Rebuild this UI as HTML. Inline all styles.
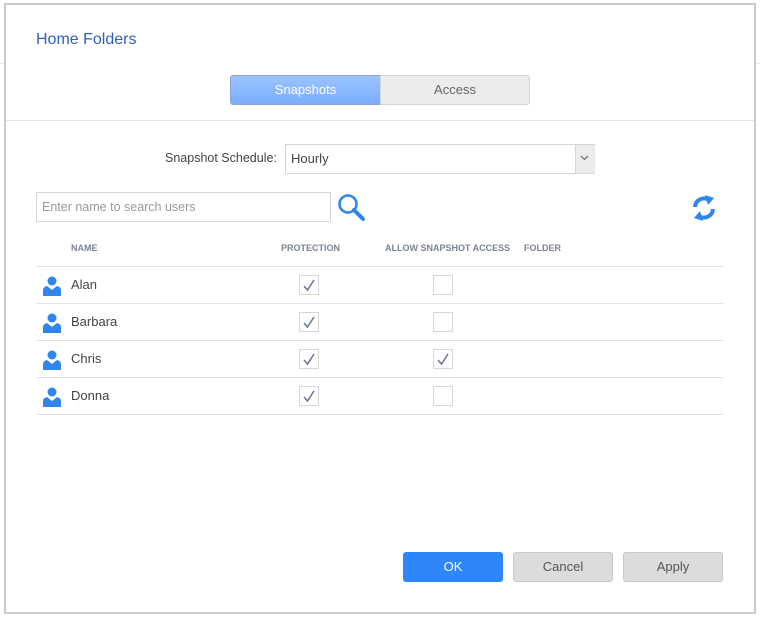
<!DOCTYPE html>
<html><head><style>
body{margin:0;width:760px;height:619px;background:#fff;position:relative;overflow:hidden;font-family:"Liberation Sans","DejaVu Sans",sans-serif;color:#444}
.a{position:absolute}
.dlg{left:4px;top:3px;width:748px;height:607px;border:2px solid #cbcbcb;background:#fff}
.btn{position:absolute;height:28px;border-radius:3px;font-size:13px;text-align:center;line-height:28px;box-sizing:border-box}
.hd{position:absolute;top:243px;font-size:9px;font-weight:bold;color:#7a8495}
.row{position:absolute;left:36px;width:688px;height:36px;border-bottom:1px solid #e3e3e3}
.nm{position:absolute;left:35px;top:10px;font-size:13px;color:#444}
.cb{position:absolute;top:8px;width:18px;height:18px;border:1px solid #d6d6d6;background:#fff}
.cb svg{position:absolute;left:2px;top:2px}
.ic{position:absolute;left:7px;top:9px}
</style></head><body>
<div class="a" style="left:0;top:63px;width:760px;height:1px;background:#e6e6e6"></div>
<div class="a dlg"></div>
<div class="a" style="left:36px;top:31px;font-size:16px;color:#2f5fbf">Home Folders</div>
<div class="btn" style="left:230px;top:75px;width:151px;height:30px;line-height:28px;background:linear-gradient(#9cc3ff,#7aaeff);border:1px solid #8aa8d6;color:#fff;border-radius:3px 0 0 3px">Snapshots</div>
<div class="btn" style="left:380px;top:75px;width:150px;height:30px;line-height:28px;background:#ececec;border:1px solid #d4d4d4;color:#666;border-radius:0 3px 3px 0">Access</div>
<div class="a" style="left:6px;top:120px;width:748px;height:1px;background:#e4e4e4"></div>
<div class="a" style="left:165px;top:151px;font-size:12.5px;color:#444">Snapshot Schedule:</div>
<div class="a" style="left:285px;top:144px;width:308px;height:28px;border:1px solid #d6d6d6"></div>
<div class="a" style="left:291px;top:151px;font-size:13px;color:#444">Hourly</div>
<div class="a" style="left:575px;top:145px;width:19px;height:28px;background:#ececec;border-left:1px solid #d6d6d6"></div>
<svg class="a" style="left:580px;top:155px" width="9" height="6"><path d="M1 1L4.5 4.5L8 1" stroke="#777" stroke-width="1.3" fill="none"/></svg>
<div class="a" style="left:36px;top:192px;width:293px;height:28px;border:1px solid #d6d6d6"></div>
<div class="a" style="left:42px;top:200px;font-size:12.5px;color:#9a9a9a">Enter name to search users</div>
<svg class="a" style="left:336px;top:193px" width="30" height="30"><circle cx="12" cy="11" r="8.5" stroke="#2f86f0" stroke-width="2.6" fill="none"/><path d="M18 17L27 26" stroke="#2f86f0" stroke-width="4" stroke-linecap="round"/></svg>
<svg class="a" style="left:691px;top:194px" width="26" height="28" viewBox="0 0 26 28"><path d="M4 13A9 9 0 0 1 18 6" stroke="#2f86f0" stroke-width="4" fill="none"/><path d="M14 1L23 4L17 11Z" fill="#2f86f0"/><path d="M22 15A9 9 0 0 1 8 22" stroke="#2f86f0" stroke-width="4" fill="none"/><path d="M12 27L3 24L9 17Z" fill="#2f86f0"/></svg>
<div class="hd" style="left:71px">NAME</div>
<div class="hd" style="left:281px">PROTECTION</div>
<div class="hd" style="left:385px">ALLOW SNAPSHOT ACCESS</div>
<div class="hd" style="left:524px">FOLDER</div>
<div class="a" style="left:36px;top:266px;width:688px;height:1px;background:#e3e3e3"></div>
<div class="row" style="top:267px"><svg class="ic" width="18" height="20"><circle cx="9" cy="5" r="4.5" fill="#2f86f0"/><path d="M0 20V14Q0 11 4 10L9 14L14 10Q18 11 18 14V20Z" fill="#2f86f0"/></svg><div class="nm">Alan</div><div class="cb" style="left:263px"><svg width="14" height="14"><path d="M2 8L5.5 12L12 2" stroke="#6d7b95" stroke-width="1.6" fill="none"/></svg></div><div class="cb" style="left:397px"></div></div>
<div class="row" style="top:304px"><svg class="ic" width="18" height="20"><circle cx="9" cy="5" r="4.5" fill="#2f86f0"/><path d="M0 20V14Q0 11 4 10L9 14L14 10Q18 11 18 14V20Z" fill="#2f86f0"/></svg><div class="nm">Barbara</div><div class="cb" style="left:263px"><svg width="14" height="14"><path d="M2 8L5.5 12L12 2" stroke="#6d7b95" stroke-width="1.6" fill="none"/></svg></div><div class="cb" style="left:397px"></div></div>
<div class="row" style="top:341px"><svg class="ic" width="18" height="20"><circle cx="9" cy="5" r="4.5" fill="#2f86f0"/><path d="M0 20V14Q0 11 4 10L9 14L14 10Q18 11 18 14V20Z" fill="#2f86f0"/></svg><div class="nm">Chris</div><div class="cb" style="left:263px"><svg width="14" height="14"><path d="M2 8L5.5 12L12 2" stroke="#6d7b95" stroke-width="1.6" fill="none"/></svg></div><div class="cb" style="left:397px"><svg width="14" height="14"><path d="M2 8L5.5 12L12 2" stroke="#6d7b95" stroke-width="1.6" fill="none"/></svg></div></div>
<div class="row" style="top:378px"><svg class="ic" width="18" height="20"><circle cx="9" cy="5" r="4.5" fill="#2f86f0"/><path d="M0 20V14Q0 11 4 10L9 14L14 10Q18 11 18 14V20Z" fill="#2f86f0"/></svg><div class="nm">Donna</div><div class="cb" style="left:263px"><svg width="14" height="14"><path d="M2 8L5.5 12L12 2" stroke="#6d7b95" stroke-width="1.6" fill="none"/></svg></div><div class="cb" style="left:397px"></div></div>
<div class="btn" style="left:403px;top:552px;width:100px;height:30px;line-height:30px;background:#2f86fb;color:#fff">OK</div>
<div class="btn" style="left:513px;top:552px;width:100px;height:30px;background:#dcdcdc;border:1px solid #c8c8c8;color:#555">Cancel</div>
<div class="btn" style="left:623px;top:552px;width:100px;height:30px;background:#dcdcdc;border:1px solid #c8c8c8;color:#555">Apply</div>
</body></html>
